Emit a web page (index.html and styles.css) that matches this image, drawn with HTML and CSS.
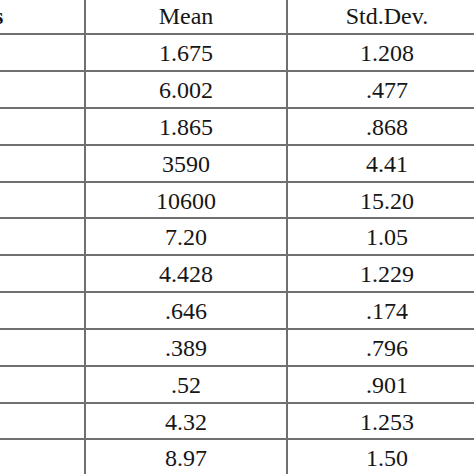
FILE: index.html
```html
<!DOCTYPE html>
<html>
<head>
<meta charset="utf-8">
<link rel="stylesheet" href="styles.css">
</head>
<body>
<div class="table">
  <div class="cell head first"><span class="cut">Variables</span></div>
  <div class="cell head">Mean</div>
  <div class="cell head">Std.Dev.</div>

  <div class="cell first"></div><div class="cell">1.675</div><div class="cell">1.208</div>
  <div class="cell first"></div><div class="cell">6.002</div><div class="cell">.477</div>
  <div class="cell first"></div><div class="cell">1.865</div><div class="cell">.868</div>
  <div class="cell first"></div><div class="cell">3590</div><div class="cell">4.41</div>
  <div class="cell first"></div><div class="cell">10600</div><div class="cell">15.20</div>
  <div class="cell first"></div><div class="cell">7.20</div><div class="cell">1.05</div>
  <div class="cell first"></div><div class="cell">4.428</div><div class="cell">1.229</div>
  <div class="cell first"></div><div class="cell">.646</div><div class="cell">.174</div>
  <div class="cell first"></div><div class="cell">.389</div><div class="cell">.796</div>
  <div class="cell first"></div><div class="cell">.52</div><div class="cell">.901</div>
  <div class="cell first"></div><div class="cell">4.32</div><div class="cell">1.253</div>
  <div class="cell first"></div><div class="cell">8.97</div><div class="cell">1.50</div>
</div>
</body>
</html>
```
FILE: styles.css
```css
html, body {
  margin: 0;
  padding: 0;
  background: #ffffff;
  overflow: hidden;
  width: 474px;
  height: 474px;
}
.table {
  display: grid;
  grid-template-columns: 84px 202px 200px;
  grid-auto-rows: 36.83px;
  margin-top: -3.5px;
  width: 486px;
  font-family: "Liberation Serif", "Times New Roman", serif;
  font-size: 24px;
  color: #161616;
}
.cell {
  box-sizing: border-box;
  border-top: 2px solid #707070;
  border-left: 2px solid #707070;
  text-align: center;
  padding-top: 2px;
  line-height: 32.83px;
  white-space: nowrap;
  overflow: hidden;
}
.cell.first {
  border-left: none;
  text-align: left;
}
.cell.head {
  padding-top: 0;
  line-height: 34.83px;
}
.cut {
  display: inline-block;
  margin-left: -93px;
  font-weight: bold;
}
```
